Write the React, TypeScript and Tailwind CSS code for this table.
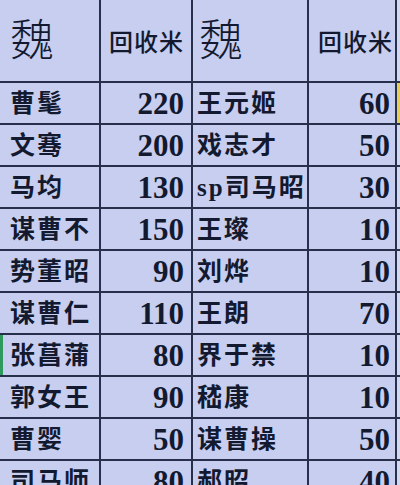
const rows: [string, number, string, number][] = [
  ["曹髦", 220, "王元姬", 60],
  ["文骞", 200, "戏志才", 50],
  ["马均", 130, "sp司马昭", 30],
  ["谋曹不", 150, "王璨", 10],
  ["势董昭", 90, "刘烨", 10],
  ["谋曹仁", 110, "王朗", 70],
  ["张菖蒲", 80, "界于禁", 10],
  ["郭女王", 90, "嵇康", 10],
  ["曹婴", 50, "谋曹操", 50],
  ["司马师", 80, "郝昭", 40],
];

const nameFont = { fontFamily: '"Liberation Serif", "Noto Sans CJK SC", serif' };
const numFont = { fontFamily: '"Liberation Serif", "Times New Roman", serif' };

const App = () => {
  return (
    <div className="w-[400px] h-[485px] overflow-hidden bg-[#c7cef0]">
      <div className="grid grid-cols-[99px_90px_114px_86px_1fr] grid-rows-[81px_repeat(10,40px)] gap-[2px] bg-[#26304b] text-[#131a30]">
        {/* Header */}
        <div className="bg-[#c7cef0] flex items-center pl-[10px] pt-[2px]">
          <span className="text-[44px] font-light leading-none" style={nameFont}>魏</span>
        </div>
        <div className="bg-[#c7cef0] flex items-center justify-end pr-[7px] pt-[4px]">
          <span className="text-[24px] font-medium leading-none tracking-[1px]" style={nameFont}>回收米</span>
        </div>
        <div className="bg-[#c7cef0] flex items-center pl-[6px] pt-[2px]">
          <span className="text-[44px] font-light leading-none" style={nameFont}>魏</span>
        </div>
        <div className="bg-[#c7cef0] flex items-center justify-end pr-[2px] pt-[4px]">
          <span className="text-[24px] font-medium leading-none tracking-[1px]" style={nameFont}>回收米</span>
        </div>
        <div className="bg-[#d3d8f2]" />

        {/* Body */}
        {rows.map(([n1, v1, n2, v2], i) => (
          <div key={i} className="contents">
            <div
              className={
                i === 6
                  ? "bg-[#c7cef0] flex items-center pl-[7px] border-l-[3px] border-[#2f9a5e]"
                  : "bg-[#c7cef0] flex items-center pl-[10px]"
              }
            >
              <span className="text-[25px] font-semibold leading-none tracking-[2px]" style={nameFont}>{n1}</span>
            </div>
            <div className="bg-[#c7cef0] flex items-center justify-end pr-[7px]">
              <span className="text-[31px] font-bold leading-none" style={numFont}>{v1}</span>
            </div>
            <div className="bg-[#c7cef0] flex items-center pl-[4px]">
              <span className="text-[25px] font-semibold leading-none tracking-[2px]" style={nameFont}>{n2}</span>
            </div>
            <div className="bg-[#c7cef0] flex items-center justify-end pr-[5px]">
              <span className="text-[31px] font-bold leading-none" style={numFont}>{v2}</span>
            </div>
            <div className={i === 0 ? "bg-[#e3cf5a]" : "bg-[#d3d8f2]"} />
          </div>
        ))}
      </div>
    </div>
  );
};

export default App;
